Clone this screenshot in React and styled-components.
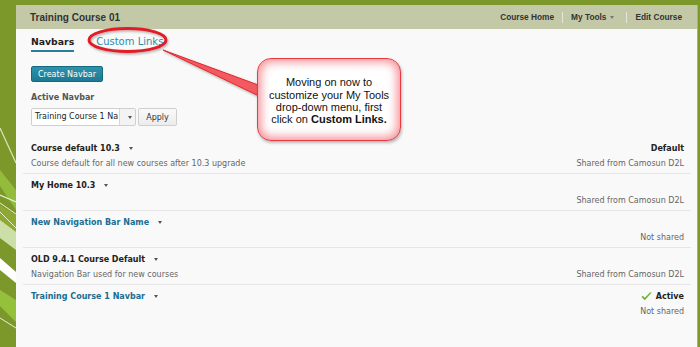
import styled, { createGlobalStyle } from 'styled-components';

const GlobalStyle = createGlobalStyle`
    html, body {
        margin: 0;
        padding: 0;
        background: #7d982a;
    }
    body {
        font-family: "DejaVu Sans", Verdana, sans-serif;
        font-size: 8px;
        color: #333;
    }
`;

const Page = styled.div`
    position: relative;
    display: flex;
    height: 347px;
    padding-top: 5px;
    padding-right: 2px;
    box-sizing: border-box;
    overflow: hidden;
`;

const Side = styled.div`
    width: 16px;
    flex-shrink: 0;
    margin-top: -5px;
    svg {
        display: block;
    }
`;

const Panel = styled.div`
    flex: 1;
    display: flex;
    flex-direction: column;
    background: #f9f9f9;
    border-right: 1px solid #a9b08c;
`;

const Header = styled.div`
    height: 24px;
    display: flex;
    align-items: center;
    justify-content: space-between;
    padding: 0 15px 0 14px;
    background: #c3c9a6;
    font-family: "Liberation Sans", Arial, sans-serif;
    font-weight: bold;
    color: #333;
`;

const Title = styled.div`
    font-size: 10px;
`;

const Nav = styled.div`
    display: flex;
    align-items: center;
    font-size: 8.3px;
`;

const NavItem = styled.span`
    display: flex;
    align-items: center;
    padding: 0 ${(p) => (p.$last ? 0 : 8)}px 0 ${(p) => (p.$first ? 0 : 8)}px;
    border-left: ${(p) => (p.$first ? 'none' : '1px solid #e4e7d6')};
    line-height: 11px;
`;

const Caret = styled.span`
    display: inline-block;
    width: 0;
    height: 0;
    border-left: 2.5px solid transparent;
    border-right: 2.5px solid transparent;
    border-top: 3px solid ${(p) => p.$color || '#555'};
    margin-left: ${(p) => p.$gap || 5}px;
    margin-right: ${(p) => p.$after || 0}px;
    vertical-align: middle;
`;

const Body = styled.div`
    padding: 0 6px 0 7px;
    display: flex;
    flex-direction: column;
`;

const Tabs = styled.div`
    display: flex;
    align-items: flex-end;
    gap: 22px;
    padding: 7px 0 0 8px;
`;

const Tab = styled.div`
    font-size: ${(p) => (p.$active ? 9.3 : 10)}px;
    line-height: 12px;
    padding-bottom: 2px;
    font-weight: ${(p) => (p.$active ? 'bold' : 'normal')};
    color: ${(p) => (p.$active ? '#222' : '#2a8db3')};
    border-bottom: 2px solid ${(p) => (p.$active ? '#2a7d98' : 'transparent')};
`;

const Section = styled.div`
    padding-left: 8px;
    display: flex;
    flex-direction: column;
    align-items: flex-start;
`;

const PrimaryButton = styled.div`
    margin-top: 14px;
    width: 72px;
    height: 16px;
    box-sizing: border-box;
    display: flex;
    align-items: center;
    justify-content: center;
    color: #fff;
    font-size: 8px;
    border: 1px solid #17677d;
    border-radius: 2px;
    background: linear-gradient(#2d93ad, #1c7a93);
`;

const Label = styled.div`
    margin-top: 10px;
    font-weight: bold;
    color: #555;
    line-height: 12px;
`;

const SelectRow = styled.div`
    margin-top: 4px;
    display: flex;
    gap: 2px;
    height: 18px;
`;

const Select = styled.div`
    display: flex;
    width: 105px;
    box-sizing: border-box;
    border: 1px solid #cfcfcf;
    border-radius: 2px;
    background: #fff;
`;

const SelectText = styled.div`
    flex: 1;
    white-space: nowrap;
    padding-left: 3px;
    line-height: 16px;
    color: #222;
`;

const SelectArrow = styled.div`
    width: 15px;
    display: flex;
    align-items: center;
    justify-content: center;
    border-left: 1px solid #d8d8d8;
    background: #f3f3f3;
`;

const Button = styled.div`
    width: 39px;
    box-sizing: border-box;
    display: flex;
    align-items: center;
    justify-content: center;
    border: 1px solid #cfcfcf;
    border-radius: 2px;
    background: linear-gradient(#fafafa, #ececec);
    color: #333;
`;

const List = styled.div`
    margin-top: 11px;
    display: flex;
    flex-direction: column;
`;

const Row = styled.div`
    height: 37px;
    box-sizing: border-box;
    display: flex;
    justify-content: space-between;
    padding: 5px 7px 0 8px;
    border-bottom: 1px solid ${(p) => (p.$last ? 'transparent' : '#e6e6e6')};
`;

const Col = styled.div`
    display: flex;
    flex-direction: column;
    align-items: ${(p) => (p.$right ? 'flex-end' : 'flex-start')};
`;

const RowTitle = styled.div`
    display: flex;
    align-items: center;
    height: 13px;
    font-weight: bold;
    color: ${(p) => (p.$link ? '#1b6e92' : '#222')};
    white-space: nowrap;
`;

const RowText = styled.div`
    margin-top: 2px;
    line-height: 13px;
    color: #666;
    white-space: nowrap;
`;

const Check = styled.svg`
    margin-right: 4px;
`;

const Overlay = styled.svg`
    position: absolute;
    left: 0;
    top: 0;
    pointer-events: none;
`;

const Bubble = styled.div`
    position: absolute;
    left: 257px;
    top: 58px;
    width: 144px;
    height: 83px;
    box-sizing: border-box;
    display: flex;
    align-items: center;
    justify-content: center;
    text-align: center;
    border: 1.5px solid #e8393f;
    border-radius: 14px;
    background: #fff;
    box-shadow: inset 0 0 10px 3px rgba(240, 70, 80, 0.6), 1px 2px 3px rgba(0, 0, 0, 0.25);
    font-family: "Liberation Sans", Arial, sans-serif;
    font-size: 11px;
    line-height: 12.4px;
    color: #111;
    padding-top: 3px;
`;

const rows = [
    { title: 'Course default 10.3', desc: 'Course default for all new courses after 10.3 upgrade', status: 'Default', share: 'Shared from Camosun D2L' },
    { title: 'My Home 10.3', desc: '', share: 'Shared from Camosun D2L' },
    { title: 'New Navigation Bar Name', link: true, share: 'Not shared' },
    { title: 'OLD 9.4.1 Course Default', desc: 'Navigation Bar used for new courses', share: 'Shared from Camosun D2L' },
    { title: 'Training Course 1 Navbar', link: true, status: 'Active', active: true, share: 'Not shared' },
];

function SideArt() {
    return (
        <svg width="16" height="347" viewBox="0 0 16 347">
            <rect width="16" height="347" fill="#7d982a" />
            <polygon points="0,170 16,190 16,210 0,186" fill="#93bb3c" />
            <polygon points="0,205 16,215 16,240 0,222" fill="#8fa834" />
            <polygon points="0,220 16,232 16,250 0,238" fill="#cddfa9" />
            <polygon points="0,258 16,272 16,283 0,270" fill="#ffffff" />
            <polygon points="0,290 16,300 16,322 0,306" fill="#95c03b" />
            <line x1="0" y1="128" x2="16" y2="163" stroke="#d9e6b8" strokeWidth="1.2" />
            <line x1="0" y1="195" x2="16" y2="202" stroke="#e8f0d0" strokeWidth="1.2" />
            <line x1="0" y1="203" x2="16" y2="214" stroke="#e8f0d0" strokeWidth="1" />
            <line x1="0" y1="212" x2="16" y2="228" stroke="#e8f0d0" strokeWidth="1" />
            <line x1="0" y1="318" x2="16" y2="328" stroke="#e8f0d0" strokeWidth="1" />
        </svg>
    );
}

export default function App() {
    return (
        <>
            <GlobalStyle />
            <Page>
                <Side>
                    <SideArt />
                </Side>
                <Panel>
                    <Header>
                        <Title>Training Course 01</Title>
                        <Nav>
                            <NavItem $first>Course Home</NavItem>
                            <NavItem>
                                My Tools
                                <Caret $color="#777" $gap={4} $after={4} />
                            </NavItem>
                            <NavItem $last>Edit Course</NavItem>
                        </Nav>
                    </Header>
                    <Body>
                        <Tabs>
                            <Tab $active>Navbars</Tab>
                            <Tab>Custom Links</Tab>
                        </Tabs>
                        <Section>
                            <PrimaryButton>Create Navbar</PrimaryButton>
                            <Label>Active Navbar</Label>
                            <SelectRow>
                                <Select>
                                    <SelectText>Training Course 1 Na</SelectText>
                                    <SelectArrow>
                                        <Caret $gap={0} />
                                    </SelectArrow>
                                </Select>
                                <Button>Apply</Button>
                            </SelectRow>
                        </Section>
                        <List>
                            {rows.map((r, i) => (
                                <Row key={r.title} $last={i === rows.length - 1}>
                                    <Col>
                                        <RowTitle $link={r.link}>
                                            {r.title}
                                            <Caret $gap={9} />
                                        </RowTitle>
                                        {r.desc && <RowText>{r.desc}</RowText>}
                                    </Col>
                                    <Col $right>
                                        <RowTitle>
                                            {r.active && (
                                                <Check width="11" height="9" viewBox="0 0 11 9">
                                                    <path d="M0.5 5 L3.8 8.2 L10.5 0.8 L9.2 0.3 L3.8 5.8 L1.8 3.8 Z" fill="#6fb52c" />
                                                </Check>
                                            )}
                                            {r.status || ''}
                                        </RowTitle>
                                        <RowText>{r.share}</RowText>
                                    </Col>
                                </Row>
                            ))}
                        </List>
                    </Body>
                </Panel>
                <Overlay width="700" height="347" viewBox="0 0 700 347">
                    <defs>
                        <filter id="sh" x="-20%" y="-50%" width="140%" height="200%">
                            <feDropShadow dx="1" dy="1.5" stdDeviation="1" floodColor="#000" floodOpacity="0.3" />
                        </filter>
                    </defs>
                    <polygon points="163,50 261,86 261,97" fill="#f25a5f" stroke="#e0262d" strokeWidth="1" filter="url(#sh)" />
                    <ellipse cx="127.5" cy="40" rx="38.5" ry="11.5" fill="none" stroke="#e21d25" strokeWidth="3" filter="url(#sh)" />
                </Overlay>
                <Bubble>
                    <div>
                        Moving on now to
                        <br />
                        customize your My Tools
                        <br />
                        drop-down menu, first
                        <br />
                        click on <b>Custom Links.</b>
                    </div>
                </Bubble>
            </Page>
        </>
    );
}
